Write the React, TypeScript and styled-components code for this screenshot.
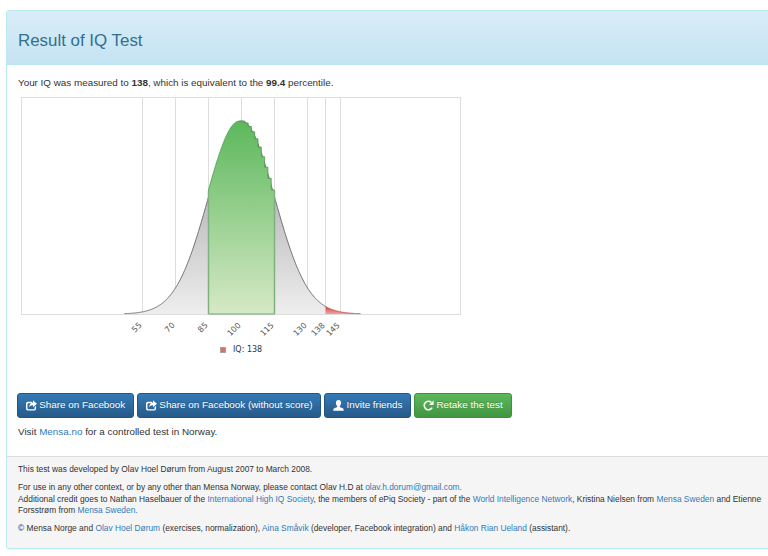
import React from "react";
import styled, { createGlobalStyle } from "styled-components";

const GlobalStyle = createGlobalStyle`
  html, body {
    margin: 0;
    padding: 0;
    height: 100%;
    overflow: hidden;
    background: #fff;
  }
  body {
    font-family: "Liberation Sans", Arial, sans-serif;
    font-size: 9.85px;
    line-height: 1.42857;
    color: #333;
  }
`;

const Page = styled.div`
  padding: 10px 0 0 6px;
  width: 790px;
`;

const Panel = styled.section`
  border: 1px solid #bce8f1;
  border-radius: 3px;
  box-shadow: 0 1px 1px rgba(0, 0, 0, 0.05);
  background: #fff;
`;

const PanelHeading = styled.header`
  height: 53px;
  display: flex;
  align-items: center;
  padding: 0 11px;
  background: linear-gradient(to bottom, #d9edf7 0, #c4e3f3 100%);
  border-bottom: 1px solid #bce8f1;
  border-radius: 2px 2px 0 0;
`;

const PanelTitle = styled.h3`
  margin: 8px 0 0;
  font-size: 16.9px;
  font-weight: 400;
  line-height: 1.1;
  color: #31708f;
`;

const PanelBody = styled.div`
  padding: 10px 11px 0;
  height: 391px;
  box-sizing: border-box;
`;

const Lead = styled.p`
  margin: 0;
  line-height: 15px;
`;

const ChartFrame = styled.div`
  margin: 7px 0 0 3px;
  height: 296px;
`;

const ButtonRow = styled.div`
  display: flex;
  gap: 3px;
  margin-left: -1px;
`;

const Button = styled.a<{ $tone: "primary" | "success" }>`
  display: inline-flex;
  align-items: center;
  gap: 2.5px;
  height: 25px;
  box-sizing: border-box;
  padding: 0 7.8px;
  border-radius: 3px;
  color: #fff;
  white-space: nowrap;
  text-shadow: 0 -1px 0 rgba(0, 0, 0, 0.2);
  border: 1px solid ${(p) => (p.$tone === "primary" ? "#245580" : "#3e8f3e")};
  background: ${(p) =>
    p.$tone === "primary"
      ? "linear-gradient(to bottom, #337ab7 0, #265a88 100%)"
      : "linear-gradient(to bottom, #5cb85c 0, #419641 100%)"};
`;

const Visit = styled.p`
  margin: 6px 0 0;
  line-height: 15px;
`;

const Link = styled.a`
  color: #337ab7;
`;

const PanelFooter = styled.footer`
  height: 92px;
  box-sizing: border-box;
  padding: 7px 11px 0;
  background: #f5f5f5;
  border-top: 1px solid #ddd;
  font-size: 8.4px;
  line-height: 11.5px;
  border-radius: 0 0 2px 2px;
`;

const Note = styled.p`
  margin: 0 0 6.5px;
  white-space: nowrap;
`;

const MEAN = 241;
const SIGMA = 33;
const BASE = 217;
const PEAK = 193;
const LEFT = 20.5;

const curveY = (x: number) => {
  const z = (x - MEAN) / SIGMA;
  return BASE - PEAK * Math.exp(-0.5 * z * z);
};

const smoothPath = (from: number, to: number) => {
  const pts: string[] = [];
  for (let x = from; x <= to; x += 1) {
    pts.push(`${x - LEFT},${curveY(x).toFixed(1)}`);
  }
  return pts;
};

// left half of the green series runs smooth, the right half comes down in steps
const greenTop = () => {
  let d = "";
  for (let x = 208; x < MEAN; x += 1) {
    d += `L${x - LEFT} ${curveY(x + 2).toFixed(1)} `;
  }
  for (let x = MEAN; x < 274 - 0.01; x += 3.3) {
    const next = Math.min(x + 3.3, 274);
    const y = curveY(next - 2).toFixed(1);
    d += `L${x - LEFT} ${y} L${next - LEFT} ${y} `;
  }
  return d;
};

const ticks = [
  { x: 142, label: "55" },
  { x: 175, label: "70" },
  { x: 208, label: "85" },
  { x: 241, label: "100" },
  { x: 274, label: "115" },
  { x: 307, label: "130" },
  { x: 325, label: "138" },
  { x: 340, label: "145" },
];

const Chart = () => {
  const greyArea =
    `M${124 - LEFT} ${BASE} L` + smoothPath(124, 360).join(" L") + ` L${360 - LEFT} ${BASE} Z`;
  const greenArea = `M${208 - LEFT} ${BASE} ${greenTop()} L${274 - LEFT} ${BASE} Z`;
  const redArea =
    `M${325 - LEFT} ${BASE} L` + smoothPath(325, 360).join(" L") + ` L${360 - LEFT} ${BASE} Z`;

  return (
    <svg width="441" height="279" viewBox="0 0 441 279" style={{ display: "block" }}>
      <defs>
        <linearGradient id="grey" x1="0" y1="24" x2="0" y2="217" gradientUnits="userSpaceOnUse">
          <stop offset="0" stopColor="#999" />
          <stop offset="1" stopColor="#eee" />
        </linearGradient>
        <linearGradient id="green" x1="0" y1="24" x2="0" y2="217" gradientUnits="userSpaceOnUse">
          <stop offset="0" stopColor="#5cb85c" />
          <stop offset="1" stopColor="#d6e9c6" />
        </linearGradient>
        <linearGradient id="red" x1="0" y1="209" x2="0" y2="217" gradientUnits="userSpaceOnUse">
          <stop offset="0" stopColor="#cf3f3b" />
          <stop offset="1" stopColor="#eda5a5" />
        </linearGradient>
      </defs>
      <rect x="0.5" y="0.5" width="439" height="217" fill="#fff" stroke="#ddd" />
      {ticks.map((t) => (
        <line key={t.x} x1={t.x - LEFT} x2={t.x - LEFT} y1="0" y2="217" stroke="#ddd" />
      ))}
      <path d={greyArea} fill="url(#grey)" stroke="none" />
      <path d={"M" + smoothPath(124, 325).join(" L")} fill="none" stroke="#666" strokeWidth="0.9" />
      <path d={redArea} fill="url(#red)" stroke="none" />
      <path d={"M" + smoothPath(325, 360).join(" L")} fill="none" stroke="#c9403c" strokeWidth="0.8" />
      <path d={greenArea} fill="url(#green)" stroke="#4f9a4f" strokeWidth="0.8" />
      <line x1={208 - LEFT} x2={208 - LEFT} y1="94" y2="217" stroke="#7fb07f" strokeWidth="1.5" />
      <line x1={274 - LEFT} x2={274 - LEFT} y1="94" y2="217" stroke="#7fb07f" strokeWidth="1.5" />
      {ticks.map((t) => (
        <text
          key={t.label}
          transform={`translate(${t.x - LEFT - 2} 227) rotate(-45)`}
          textAnchor="end"
          dominantBaseline="middle"
          fontFamily="DejaVu Sans, sans-serif"
          fontSize="8"
          fill="#555"
        >
          {t.label}
        </text>
      ))}
      <rect x="199.5" y="250.5" width="5" height="5" fill="#d9706c" stroke="#999" strokeWidth="0.8" />
      <text x="212" y="255" fontFamily="DejaVu Sans, sans-serif" fontSize="8" fill="#333">
        IQ: 138
      </text>
    </svg>
  );
};

const ShareIcon = () => (
  <svg width="11" height="11" viewBox="0 0 12 12" fill="#fff">
    <path d="M2 2 H6.5 V3.6 H2.6 A1 1 0 0 0 1.6 4.6 V9 A1 1 0 0 0 2.6 10 H8.4 A1 1 0 0 0 9.4 9 V7.6 L11 6.2 V9.4 A2 2 0 0 1 9 11.4 H2 A2 2 0 0 1 0 9.4 V4 A2 2 0 0 1 2 2 Z" />
    <path d="M7.6 0.4 L12 4.2 L7.6 8 V5.8 C5.6 5.6 4.4 6.4 3.4 8.2 C3.4 5.2 5 3 7.6 2.6 Z" />
  </svg>
);

const UserIcon = () => (
  <svg width="11" height="11" viewBox="0 0 12 12" fill="#fff">
    <path d="M6 0 C7.9 0 8.8 1.4 8.8 3.2 C8.8 4.8 8 6 7.4 6.6 V7.6 C8.8 8.2 11.4 8.8 11.6 10 V11.6 H0.4 V10 C0.6 8.8 3.2 8.2 4.6 7.6 V6.6 C4 6 3.2 4.8 3.2 3.2 C3.2 1.4 4.1 0 6 0 Z" />
  </svg>
);

const RepeatIcon = () => (
  <svg width="11" height="11" viewBox="0 0 12 12" fill="none">
    <path d="M10 8.2 A4.6 4.6 0 1 1 9.2 2.8" stroke="#fff" strokeWidth="1.7" />
    <path d="M11.6 0.4 V5.4 H6.6 Z" fill="#fff" />
  </svg>
);

export default function App() {
  return (
    <>
      <GlobalStyle />
      <Page>
        <Panel>
          <PanelHeading>
            <PanelTitle>Result of IQ Test</PanelTitle>
          </PanelHeading>
          <PanelBody>
            <Lead>
              Your IQ was measured to <b>138</b>, which is equivalent to the <b>99.4</b> percentile.
            </Lead>
            <ChartFrame>
              <Chart />
            </ChartFrame>
            <ButtonRow>
              <Button $tone="primary"><ShareIcon />Share on Facebook</Button>
              <Button $tone="primary"><ShareIcon />Share on Facebook (without score)</Button>
              <Button $tone="primary"><UserIcon />Invite friends</Button>
              <Button $tone="success"><RepeatIcon />Retake the test</Button>
            </ButtonRow>
            <Visit>
              Visit <Link>Mensa.no</Link> for a controlled test in Norway.
            </Visit>
          </PanelBody>
          <PanelFooter>
            <Note>This test was developed by Olav Hoel Dørum from August 2007 to March 2008.</Note>
            <Note>
              For use in any other context, or by any other than Mensa Norway, please contact Olav H.D at{" "}
              <Link>olav.h.dorum@gmail.com.</Link>
              <br />
              Additional credit goes to Nathan Haselbauer of the <Link>International High IQ Society</Link>, the
              members of ePiq Society - part of the <Link>World Intelligence Network</Link>, Kristina Nielsen from{" "}
              <Link>Mensa Sweden</Link> and Etienne
              <br />
              Forsstrøm from <Link>Mensa Sweden.</Link>
            </Note>
            <Note>
              © Mensa Norge and <Link>Olav Hoel Dørum</Link> (exercises, normalization), <Link>Aina Småvik</Link>{" "}
              (developer, Facebook integration) and <Link>Håkon Rian Ueland</Link> (assistant).
            </Note>
          </PanelFooter>
        </Panel>
      </Page>
    </>
  );
}
